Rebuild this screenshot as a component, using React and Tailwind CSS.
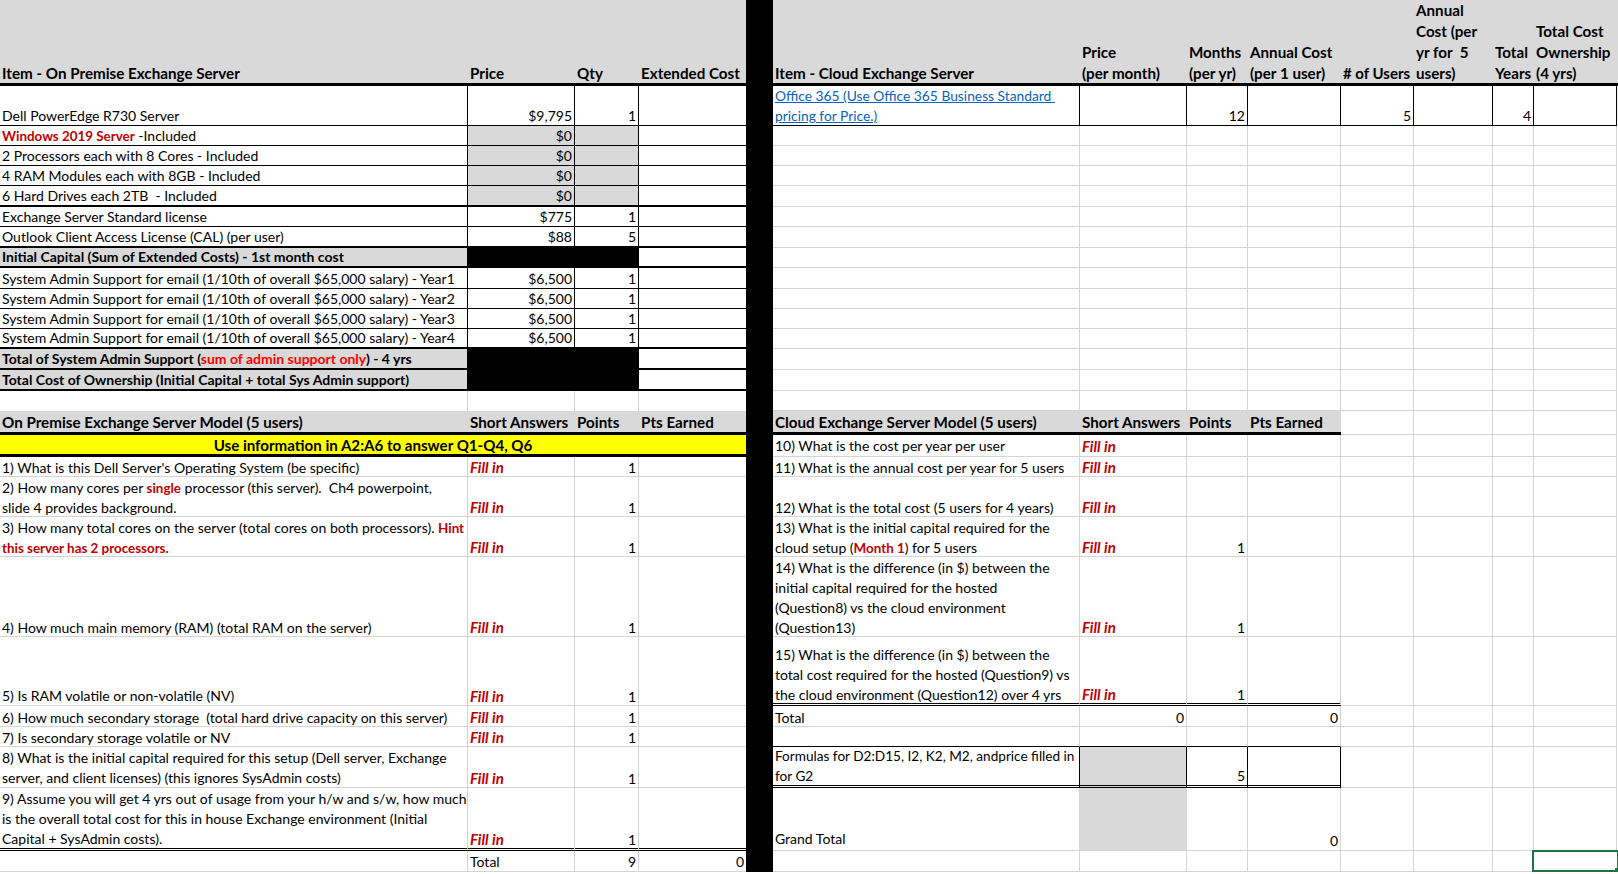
import { Fragment } from "react";

const bottoms = {
  n: "",
  g: "border-b border-b-[#d4d4d4]",
  k: "border-b border-b-black",
  k2: "border-b-2 border-b-black",
  k3: "border-b-[3px] border-b-black",
  d: "border-b-[3px] [border-bottom-style:double] border-b-black",
};
const sides = {
  n: "",
  g: "border-r border-r-[#d4d4d4]",
  k: "border-r border-r-black",
};

function Cell({ b = "g", r = "g", fill = "", num, head, low, className = "", children }) {
  return (
    <div
      className={`flex items-end whitespace-pre ${head ? "text-[15.2px] font-bold leading-[21px]" : "leading-5"} ${num ? "justify-end pr-[2px]" : "pl-[2px]"} ${bottoms[b]} ${sides[r]} ${fill} ${className}`}
    >
      <div className={low ? "-mb-[2px]" : "-mb-px"}>{children}</div>
    </div>
  );
}

const Red = ({ children }) => <span className="text-[13.4px] font-bold text-[#c00000]">{children}</span>;
const FillIn = () => <span className="text-[15px] font-bold italic text-[#c00000]">Fill in</span>;

const GRAY = "bg-[#d9d9d9]";

// colonnes I à M, vides
function EmptyRight({ from = 0, b = "g" }) {
  const cols = [0, 1, 2, 3, 4, 5, 6, 7].slice(from);
  return (
    <>
      {cols.map(i => (
        <Cell key={i} b={b} />
      ))}
      <Cell b="n" r="n" />
    </>
  );
}

const specs = [
  { label: <><Red>Windows 2019 Server</Red> -Included</>, price: "$0", grayed: true },
  { label: "2 Processors each with 8 Cores - Included", price: "$0", grayed: true },
  { label: "4 RAM Modules each with 8GB - Included", price: "$0", grayed: true },
  { label: "6 Hard Drives each 2TB  - Included", price: "$0", grayed: true, b: "k2" },
  { label: "Exchange Server Standard license", price: "$775", qty: "1" },
  { label: "Outlook Client Access License (CAL) (per user)", price: "$88", qty: "5", b: "k2" },
  { label: "Initial Capital (Sum of Extended Costs) - 1st month cost", total: true, b: "k2" },
  { label: "System Admin Support for email (1/10th of overall $65,000 salary) - Year1", price: "$6,500", qty: "1" },
  { label: "System Admin Support for email (1/10th of overall $65,000 salary) - Year2", price: "$6,500", qty: "1" },
  { label: "System Admin Support for email (1/10th of overall $65,000 salary) - Year3", price: "$6,500", qty: "1" },
  { label: "System Admin Support for email (1/10th of overall $65,000 salary) - Year4", price: "$6,500", qty: "1", b: "k2" },
  {
    label: <>Total of System Admin Support (<span className="text-[#ff0000]">sum of admin support only</span>) - 4 yrs</>,
    total: true,
    b: "k2",
  },
  { label: "Total Cost of Ownership (Initial Capital + total Sys Admin support)", total: true, b: "k2" },
];

const questions = [
  {
    left: "1) What is this Dell Server's Operating System (be specific)",
    right: "11) What is the annual cost per year for 5 users",
    low: true,
  },
  {
    left: <>2) How many cores per <Red>single</Red> processor (this server).  Ch4 powerpoint,<br />slide 4 provides background.</>,
    right: "12) What is the total cost (5 users for 4 years)",
    low: true,
  },
  {
    left: <>3) How many total cores on the server (total cores on both processors). <Red>Hint<br />this server has 2 processors.</Red></>,
    right: <>13) What is the initial capital required for the<br />cloud setup (<Red>Month 1</Red>) for 5 users</>,
    pts: "1",
    low: true,
  },
  {
    left: "4) How much main memory (RAM) (total RAM on the server)",
    right: <>14) What is the difference (in $) between the<br />initial capital required for the hosted<br />(Question8) vs the cloud environment<br />(Question13)</>,
    pts: "1",
    low: true,
  },
  {
    left: "5) Is RAM volatile or non-volatile (NV)",
    right: <>15) What is the difference (in $) between the<br />total cost required for the hosted (Question9) vs<br />the cloud environment (Question12) over 4 yrs</>,
    pts: "1",
    rb: "d",
  },
];

function LeftQuestion({ text, b = "g", low }) {
  return (
    <>
      <Cell b={b} low={low}>{text}</Cell>
      <Cell b={b} low><FillIn /></Cell>
      <Cell b={b} low num>1</Cell>
      <Cell b={b} r="n" />
    </>
  );
}

export default function App() {
  return (
    <div className="relative h-[874px] w-[1618px] overflow-hidden bg-white font-[family-name:Lato,sans-serif] text-[14px] text-black">
      <div className="grid grid-cols-[468px_107px_64px_107px_27px_307px_107px_61px_93px_73px_79px_41px_83px_1px] grid-rows-[86px_40px_20px_20px_20px_21px_20px_21px_20px_21px_20px_20px_20px_21px_21px_20px_24px_22px_20px_40px_40px_80px_69px_21px_20px_41px_63px_21px]">
        {/* barre noire entre les deux tableaux */}
        <div className="col-[5] row-[1/29] bg-black" />

        {/* En-têtes */}
        <Cell head b="k3" r="n" fill={GRAY}>Item - On Premise Exchange Server</Cell>
        <Cell head b="k3" r="n" fill={GRAY}>Price</Cell>
        <Cell head b="k3" r="n" fill={GRAY}>Qty</Cell>
        <Cell head b="k3" r="n" fill={GRAY}>Extended Cost</Cell>
        <Cell head b="k3" r="n" fill={GRAY}>Item - Cloud Exchange Server</Cell>
        <Cell head b="k3" r="n" fill={GRAY}>Price<br />(per month)</Cell>
        <Cell head b="k3" r="n" fill={GRAY}>Months<br />(per yr)</Cell>
        <Cell head b="k3" r="n" fill={GRAY}>Annual Cost<br />(per 1 user)</Cell>
        <Cell head b="k3" r="n" fill={GRAY} className="text-[15px]"># of Users</Cell>
        <Cell head b="k3" r="n" fill={GRAY}>Annual<br />Cost (per<br />yr for  5<br />users)</Cell>
        <Cell head b="k3" r="n" fill={GRAY}>Total<br />Years</Cell>
        <Cell head b="k3" r="n" fill={GRAY}>Total Cost<br />Ownership<br />(4 yrs)</Cell>
        <Cell b="k3" r="n" fill={GRAY} />

        {/* Ligne 2 */}
        <Cell b="k" r="k">Dell PowerEdge R730 Server</Cell>
        <Cell b="k" r="k" num>$9,795</Cell>
        <Cell b="k" r="k" num>1</Cell>
        <Cell b="k" r="n" />
        <Cell b="k" r="k">
          <span className="text-[13.8px] text-[#0563c1] underline">Office 365 (Use Office 365 Business Standard <br />pricing for Price.)</span>
        </Cell>
        <Cell b="k" r="k" />
        <Cell b="k" r="k" num>12</Cell>
        <Cell b="k" r="k" />
        <Cell b="k" r="k" num>5</Cell>
        <Cell b="k" r="k" />
        <Cell b="k" r="k" num>4</Cell>
        <Cell b="k" r="k" />
        <Cell b="n" r="n" />

        {/* Matériel et totaux */}
        {specs.map((s, i) => {
          const b = s.b || "k";
          return (
            <Fragment key={i}>
              <Cell b={b} r="k" fill={s.total ? GRAY : ""} className={s.total ? "font-bold" : ""}>{s.label}</Cell>
              {s.total ? (
                <div className={`col-span-2 bg-black ${bottoms[b]}`} />
              ) : (
                <>
                  <Cell b={b} r="k" num fill={s.grayed ? GRAY : ""}>{s.price}</Cell>
                  <Cell b={b} r="k" num fill={s.grayed ? GRAY : ""}>{s.qty}</Cell>
                </>
              )}
              <Cell b={b} r="n" />
              <EmptyRight />
            </Fragment>
          );
        })}

        {/* Ligne vide */}
        <Cell b="n" />
        <Cell b="n" />
        <Cell b="n" />
        <Cell b="n" r="n" />
        <EmptyRight />

        {/* En-têtes des questions */}
        <Cell head b="k3" r="n" fill={GRAY}>On Premise Exchange Server Model (5 users)</Cell>
        <Cell head b="k3" r="n" fill={GRAY}>Short Answers</Cell>
        <Cell head b="k3" r="n" fill={GRAY}>Points</Cell>
        <Cell head b="k3" r="n" fill={GRAY}>Pts Earned</Cell>
        <Cell head b="k3" r="n" fill={GRAY}>Cloud Exchange Server Model (5 users)</Cell>
        <Cell head b="k3" r="n" fill={GRAY}>Short Answers</Cell>
        <Cell head b="k3" r="n" fill={GRAY}>Points</Cell>
        <Cell head b="k3" r="n" fill={GRAY}>Pts Earned</Cell>
        <EmptyRight from={4} />

        {/* Bandeau jaune */}
        <div className="col-span-4 flex items-end justify-center border-b-[3px] border-b-black bg-[#ffff00] text-[15.1px] font-bold leading-5">
          <div className="-mb-px">Use information in A2:A6 to answer Q1-Q4, Q6</div>
        </div>
        <Cell className="pb-px">10) What is the cost per year per user</Cell>
        <Cell><FillIn /></Cell>
        <Cell />
        <Cell />
        <EmptyRight from={4} />

        {questions.map((q, i) => {
          const rb = q.rb || "g";
          return (
            <Fragment key={i}>
              <LeftQuestion text={q.left} low={q.low} />
              <Cell b={rb} low>{q.right}</Cell>
              <Cell b={rb} low><FillIn /></Cell>
              <Cell b={rb} low num>{q.pts}</Cell>
              <Cell b={rb} />
              <EmptyRight from={4} />
            </Fragment>
          );
        })}

        {/* Q6 / Total */}
        <LeftQuestion low text="6) How much secondary storage  (total hard drive capacity on this server)" />
        <Cell low>Total</Cell>
        <Cell low num>0</Cell>
        <Cell />
        <Cell low num>0</Cell>
        <EmptyRight from={4} />

        {/* Q7 */}
        <LeftQuestion low text="7) Is secondary storage volatile or NV" />
        <Cell b="k" />
        <Cell b="k" />
        <Cell b="k" />
        <Cell b="k" />
        <EmptyRight from={4} />

        {/* Q8 / Formules */}
        <LeftQuestion text={<>8) What is the initial capital required for this setup (Dell server, Exchange<br />server, and client licenses) (this ignores SysAdmin costs)</>} />
        <Cell b="d" r="k" className="text-[13.6px]">Formulas for D2:D15, I2, K2, M2, andprice filled in<br />for G2</Cell>
        <Cell b="d" r="k" fill={GRAY} />
        <Cell b="d" r="k" num>5</Cell>
        <Cell b="d" r="k" />
        <EmptyRight from={4} />

        {/* Q9 / Grand Total */}
        <LeftQuestion b="d" text={<>9) Assume you will get 4 yrs out of usage from your h/w and s/w, how much<br />is the overall total cost for this in house Exchange environment (Initial<br />Capital + SysAdmin costs).</>} />
        <Cell className="pb-[2px]">Grand Total</Cell>
        <Cell fill={GRAY} />
        <Cell />
        <Cell num>0</Cell>
        <EmptyRight from={4} />

        {/* Total gauche */}
        <Cell />
        <Cell>Total</Cell>
        <Cell num>9</Cell>
        <Cell r="n" num>0</Cell>
        <Cell />
        <Cell />
        <Cell />
        <Cell />
        <Cell />
        <Cell />
        <Cell />
        <div className="relative border-b border-b-[#d4d4d4]">
          <div className="absolute inset-x-[-2px] inset-y-[-1px] border-2 border-[#217346]" />
          <div className="absolute bottom-[-1px] right-[-2px] h-[4px] w-[4px] bg-[#217346]" />
        </div>
        <Cell b="n" r="n" />
      </div>
    </div>
  );
}
